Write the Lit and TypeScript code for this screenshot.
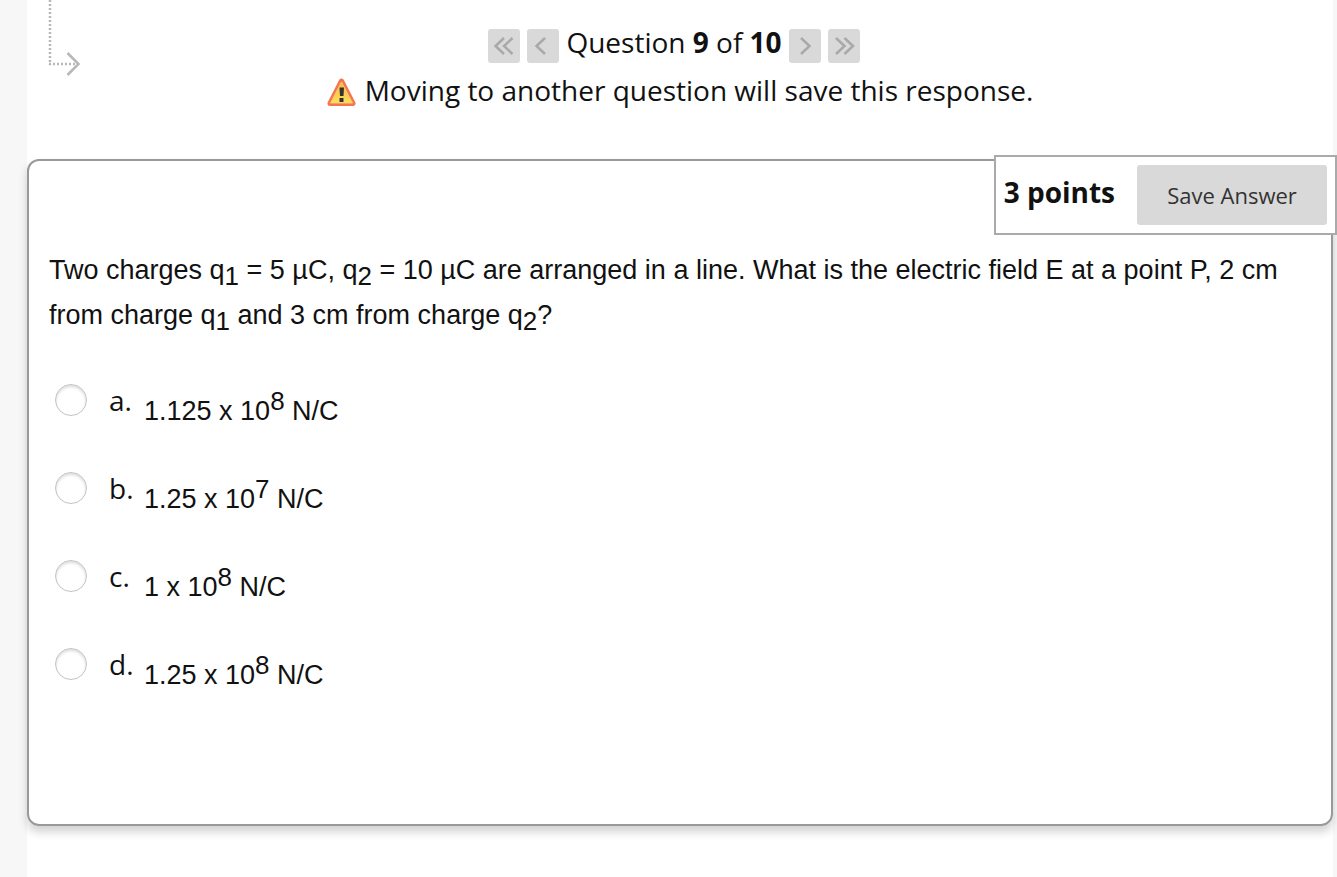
import { LitElement, html, css, svg } from "lit";
import { customElement, state } from "lit/decorators.js";

interface Choice {
  letter: string;
  mantissa: string;
  exponent: string;
}

const choices: Choice[] = [
  { letter: "a", mantissa: "1.125", exponent: "8" },
  { letter: "b", mantissa: "1.25", exponent: "7" },
  { letter: "c", mantissa: "1", exponent: "8" },
  { letter: "d", mantissa: "1.25", exponent: "8" },
];

const arrows = {
  first: svg`<path d="M16 9 7.500 17 16 25M24.500 9 16 17 24.500 25" />`,
  previous: svg`<path d="M18 9 9.500 17 18 25" />`,
  next: svg`<path d="M12 9 20.500 17 12 25" />`,
  last: svg`<path d="M8 9 16.500 17 8 25M16.500 9 25 17 16.500 25" />`,
};

@customElement("app-root")
export class AppRoot extends LitElement {
  @state() private selected = "";

  static styles = css`
    :host {
      display: block;
      box-sizing: border-box;
      min-height: 100vh;
      padding: 0 4px 0 27px;
      background: #f7f7f7;
      color: #111;
      font-family: "Open Sans", "Noto Sans", sans-serif;
      font-size: 28px;
      line-height: 48px;
    }
    .page {
      box-sizing: border-box;
      min-height: 100vh;
      background: #fff;
    }
    .header {
      display: grid;
      grid-template-columns: 1fr;
      height: 159px;
    }
    .branch {
      grid-area: 1 / 1;
      width: 60px;
      height: 80px;
    }
    .status {
      grid-area: 1 / 1;
      display: flex;
      flex-direction: column;
      align-items: center;
      padding-top: 18px;
    }
    .pager {
      display: flex;
      gap: 7px;
      padding-right: 12px;
    }
    .step {
      width: 32px;
      height: 34px;
      margin: 11px 0 0;
      padding: 0;
      border: 0;
      border-radius: 3px;
      background: #d9d9d9;
    }
    .step svg {
      display: block;
      fill: none;
      stroke: #a9a9a9;
      stroke-width: 2.500;
    }
    .notice {
      display: flex;
      gap: 9px;
      margin: 0;
    }
    .warning {
      width: 29px;
      height: 29px;
      margin-top: 12px;
    }
    .card {
      position: relative;
      box-sizing: border-box;
      min-height: 667px;
      padding: 87px 20px 20px;
      border: 2px solid #999;
      border-radius: 12px;
      box-shadow: 0 6px 10px rgba(0, 0, 0, 0.18);
    }
    .tools {
      position: absolute;
      top: -6px;
      right: -6px;
      display: flex;
      gap: 22px;
      padding: 8px;
      border: 2px solid #aaa;
      background: #fff;
    }
    .points {
      line-height: 55px;
    }
    .save {
      width: 190px;
      height: 60px;
      padding: 0;
      border: 0;
      border-radius: 3px;
      background: #d9d9d9;
      color: #333;
      font-family: inherit;
      font-size: 22px;
    }
    .question,
    .value {
      font-family: "Liberation Sans", Arial, sans-serif;
      font-size: 27px;
    }
    .question {
      margin: 0;
      line-height: 45px;
    }
    sub,
    sup {
      font-size: 26px;
      line-height: 0;
    }
    .choices {
      display: grid;
      gap: 40px;
      margin: 0;
      padding: 40px 0 0;
      border: 0;
    }
    .choice {
      display: flex;
      height: 48px;
      line-height: 44px;
    }
    .radio {
      appearance: none;
      width: 32px;
      height: 32px;
      margin: 6px 22px 0 6px;
      border: 1px solid #c4c4c4;
      border-radius: 50%;
      background: #fff;
      box-shadow: inset 0 2px 3px rgba(0, 0, 0, 0.14);
    }
    .radio:checked {
      background: radial-gradient(#333 35%, #fff 40%);
    }
    .label {
      display: flex;
    }
    .letter {
      width: 35px;
    }
    .value {
      padding-top: 11px;
    }
  `;

  private step(label: string, name: keyof typeof arrows) {
    return html`<button class="step" type="button" aria-label=${label}>
      <svg width="32" height="34" viewBox="0 0 32 34" aria-hidden="true">${arrows[name]}</svg>
    </button>`;
  }

  private choice(c: Choice) {
    const id = `choice-${c.letter}`;
    return html`<div class="choice">
      <input
        class="radio"
        type="radio"
        name="answer"
        id=${id}
        .checked=${this.selected === c.letter}
        @change=${() => (this.selected = c.letter)}
      />
      <label class="label" for=${id}>
        <span class="letter">${c.letter}.</span>
        <span class="value">${c.mantissa} x 10<sup>${c.exponent}</sup> N/C</span>
      </label>
    </div>`;
  }

  render() {
    return html`<main class="page">
      <header class="header">
        <svg class="branch" viewBox="0 0 60 80" fill="none" stroke="#b8b8b8" aria-hidden="true">
          <path d="M23 0V65" stroke-width="2.500" stroke-dasharray="2 2" />
          <path d="M22 64H51" stroke-width="2.500" stroke-dasharray="2 2" />
          <path d="M40.500 53 51.500 64 40.500 75" stroke-width="2.500" />
        </svg>
        <div class="status">
          <nav class="pager" aria-label="Questions">
            ${this.step("First question", "first")} ${this.step("Previous question", "previous")}
            <span>Question <b>9</b> of <b>10</b></span>
            ${this.step("Next question", "next")} ${this.step("Last question", "last")}
          </nav>
          <p class="notice">
            <svg class="warning" viewBox="0 0 29 29" aria-hidden="true">
              <defs>
                <linearGradient id="amber" x1="0" y1="0" x2="0" y2="1">
                  <stop offset="0" stop-color="#f6b73a" />
                  <stop offset="1" stop-color="#fde05a" />
                </linearGradient>
              </defs>
              <path d="M14.500 3 26 25.500H3Z" fill="#f4764a" stroke="#f4764a" stroke-width="5" stroke-linejoin="round" />
              <path d="M14.500 4 25.500 25H3.500Z" fill="url(#amber)" stroke="#fbc978" stroke-width="1" stroke-linejoin="round" />
              <path d="M12.500 9.500h4.500l-.5 8.500h-3.500zM12.500 20h4v4h-4z" fill="#333" />
            </svg>
            <span>Moving to another question will save this response.</span>
          </p>
        </div>
      </header>
      <section class="card">
        <div class="tools">
          <b class="points">3 points</b>
          <button class="save" type="button">Save Answer</button>
        </div>
        <p class="question" id="question">
          Two charges q<sub>1</sub> = 5 µC, q<sub>2</sub> = 10 µC are arranged in a line. What is
          the electric field E at a point P, 2 cm from charge q<sub>1</sub> and 3 cm from charge
          q<sub>2</sub>?
        </p>
        <fieldset class="choices" aria-labelledby="question">
          ${choices.map((c) => this.choice(c))}
        </fieldset>
      </section>
    </main>`;
  }
}
